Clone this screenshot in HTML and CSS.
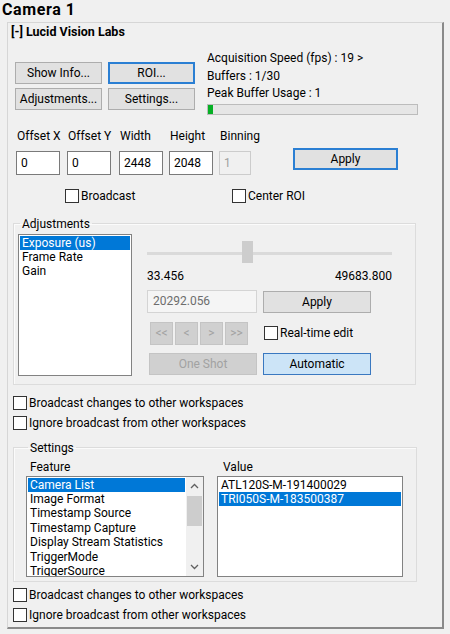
FILE: index.html
```html
<!DOCTYPE html>
<html>
<head>
<meta charset="utf-8">
<title>Camera 1</title>
<link rel="stylesheet" href="styles.css">
</head>
<body>
<div class="title">Camera 1</div>
<div class="panel">
  <div class="panel-head">[-] Lucid Vision Labs</div>

  <div class="top">
    <div class="btn-grid">
      <button class="btn">Show Info...</button>
      <button class="btn focus">ROI...</button>
      <button class="btn">Adjustments...</button>
      <button class="btn">Settings...</button>
    </div>
    <div class="info">
      <div class="info-line">Acquisition Speed (fps) : 19 &gt;</div>
      <div class="info-line">Buffers : 1/30</div>
      <div class="info-line">Peak Buffer Usage : 1</div>
      <div class="progress"><div class="progress-fill" style="width:5px"></div></div>
    </div>
  </div>

  <div class="roi">
    <div class="field f1"><span class="field-label">Offset X</span><span class="textbox">0</span></div>
    <div class="field f2"><span class="field-label">Offset Y</span><span class="textbox">0</span></div>
    <div class="field f3"><span class="field-label">Width</span><span class="textbox">2448</span></div>
    <div class="field f4"><span class="field-label">Height</span><span class="textbox">2048</span></div>
    <div class="field f5"><span class="field-label">Binning</span><span class="textbox disabled">1</span></div>
    <button class="btn focus apply-roi">Apply</button>
  </div>

  <div class="roi-checks">
    <span class="check"><span class="box"></span>Broadcast</span>
    <span class="check"><span class="box"></span>Center ROI</span>
  </div>

  <fieldset class="group adjustments">
    <legend>Adjustments</legend>
    <div class="adj-body">
      <div class="listbox adj-list">
        <div class="item sel">Exposure (us)</div>
        <div class="item">Frame Rate</div>
        <div class="item">Gain</div>
      </div>
      <div class="adj-controls">
        <div class="slider"><div class="thumb"></div></div>
        <div class="range"><span>33.456</span><span>49683.800</span></div>
        <div class="entry-row">
          <span class="textbox readonly">20292.056</span>
          <button class="btn apply-adj">Apply</button>
        </div>
        <div class="nav-row">
          <button class="btn off nav">&lt;&lt;</button>
          <button class="btn off nav">&lt;</button>
          <button class="btn off nav">&gt;</button>
          <button class="btn off nav">&gt;&gt;</button>
          <span class="check realtime"><span class="box"></span>Real-time edit</span>
        </div>
        <div class="shot-row">
          <button class="btn off one-shot">One Shot</button>
          <button class="btn active automatic">Automatic</button>
        </div>
      </div>
    </div>
  </fieldset>

  <div class="ws-checks">
    <div class="check-line"><span class="box"></span>Broadcast changes to other workspaces</div>
    <div class="check-line"><span class="box"></span>Ignore broadcast from other workspaces</div>
  </div>

  <fieldset class="group settings">
    <legend>Settings</legend>
    <div class="settings-body">
      <div class="col">
        <div class="col-label">Feature</div>
        <div class="listbox feature-list">
          <div class="items">
            <div class="item sel">Camera List</div>
            <div class="item">Image Format</div>
            <div class="item">Timestamp Source</div>
            <div class="item">Timestamp Capture</div>
            <div class="item">Display Stream Statistics</div>
            <div class="item">TriggerMode</div>
            <div class="item">TriggerSource</div>
          </div>
          <div class="scrollbar">
            <div class="arrow"><svg width="9" height="6" viewBox="0 0 9 6"><polyline points="1,5 4.5,1.5 8,5" fill="none" stroke="#606060" stroke-width="1.3"/></svg></div>
            <div class="sb-thumb"></div>
            <div class="arrow down"><svg width="9" height="6" viewBox="0 0 9 6"><polyline points="1,1 4.5,4.5 8,1" fill="none" stroke="#606060" stroke-width="1.3"/></svg></div>
          </div>
        </div>
      </div>
      <div class="col">
        <div class="col-label value-label">Value</div>
        <div class="listbox value-list">
          <div class="item">ATL120S-M-191400029</div>
          <div class="item sel">TRI050S-M-183500387</div>
        </div>
      </div>
    </div>
  </fieldset>

  <div class="ws-checks bottom">
    <div class="check-line"><span class="box"></span>Broadcast changes to other workspaces</div>
    <div class="check-line"><span class="box"></span>Ignore broadcast from other workspaces</div>
  </div>
</div>
</body>
</html>
```

FILE: styles.css
```css
* { box-sizing: border-box; }

html, body { margin: 0; padding: 0; }

body {
  width: 450px;
  height: 634px;
  overflow: hidden;
  background: #f0f0f0;
  color: #000;
  font-family: Roboto, "Noto Sans", sans-serif;
  font-size: 12px;
}

.title {
  font-weight: bold;
  font-size: 16px;
  letter-spacing: 0.6px;
  line-height: 20px;
  padding-left: 2px;
}

.panel {
  margin: 2px 0 0 7px;
  width: 437px;
  height: 607px;
  border-style: solid;
  border-width: 1px 2px 2px 1px;
  border-color: #d6d6d6 #8a8a8a #8a8a8a #d6d6d6;
}

.panel-head {
  font-weight: bold;
  font-size: 12.5px;
  line-height: 18px;
  padding-left: 3px;
}

/* buttons */
.btn {
  font: inherit;
  color: #000;
  height: 22px;
  padding: 0;
  background: #e1e1e1;
  border: 1px solid #adadad;
  white-space: nowrap;
}
.btn.focus { border: 2px solid #2b7fd3; }
.btn.off { background: #d0d0d0; border-color: #c4c4c4; color: #a2a2a2; }
.btn.active { background: #cce4f7; border-color: #3a78c0; }

/* top */
.top { display: flex; margin-top: 8px; }
.btn-grid {
  display: grid;
  grid-template-columns: 87px 87px;
  grid-auto-rows: 22px;
  column-gap: 6px;
  row-gap: 4px;
  margin: 13px 0 0 7px;
}
.info { margin-left: 12px; padding-top: 1px; }
.info-line { line-height: 17.5px; white-space: nowrap; }
.progress {
  margin-top: 1px;
  width: 211px;
  height: 11px;
  border: 1px solid #bcbcbc;
  background: #e6e6e6;
}
.progress-fill { height: 100%; background: #06b025; }

/* ROI */
.roi { display: flex; margin-top: 13px; padding-left: 8px; }
.field { display: flex; flex-direction: column; }
.f1 { width: 51px; }
.f2 { width: 52px; }
.f3 { width: 50px; }
.f4 { width: 50px; }
.f5 { width: 32px; }
.field-label { line-height: 16px; padding-left: 1px; margin-bottom: 7px; white-space: nowrap; }
.textbox {
  display: block;
  width: 44px;
  height: 24px;
  border: 1px solid #7a7a7a;
  background: #fff;
  padding-left: 4px;
  line-height: 22px;
}
.textbox.disabled { width: 32px; border-color: #cccccc; background: #f0f0f0; color: #a0a0a0; }
.apply-roi { width: 105px; margin: 20px 0 0 42px; }

.roi-checks {
  display: grid;
  grid-template-columns: 167px auto;
  margin-top: 13px;
  padding-left: 57px;
  line-height: 16px;
}
.check { display: inline-flex; align-items: center; gap: 2px; white-space: nowrap; }
.box {
  display: inline-block;
  flex: none;
  width: 14px;
  height: 14px;
  border: 1px solid #333;
  background: #fff;
}

/* group boxes */
fieldset.group {
  margin: 12px 0 0 5px;
  min-width: 0;
  border: 1px solid #dcdcdc;
  box-shadow: inset 1px 1px 0 #fbfbfb;
}
fieldset.group legend {
  padding: 0 2px;
  margin-left: 2px;
  line-height: 16px;
  font-size: 12px;
}
fieldset.adjustments { width: 403px; padding: 2px 8px 8px 4px; }

.listbox { border: 1px solid #828282; background: #fff; padding: 1px; }
.item { line-height: 14.4px; padding-left: 2px; white-space: nowrap; }
.item.sel { background: #0078d7; color: #fff; }

.adj-body { display: flex; }
.adj-list { width: 114px; height: 142px; }
.adj-controls { margin-left: 15px; width: 245px; padding-top: 7px; }
.slider {
  height: 22px;
  background: linear-gradient(#dadada, #dadada) 0 11px / 100% 3px no-repeat;
}
.thumb { width: 11px; height: 22px; margin-left: 95px; background: #cdcdcd; }
.range { display: flex; justify-content: space-between; line-height: 16px; margin-top: 5px; }
.entry-row { display: flex; align-items: flex-start; margin-top: 6px; }
.textbox.readonly { width: 110px; height: 23px; line-height: 21px; padding-left: 5px; background: #f5f5f5; border-color: #d4d4d4; color: #6d6d6d; }
.apply-adj { width: 108px; margin: 1px 0 0 6px; }
.nav-row { display: flex; align-items: center; margin-top: 9px; padding-left: 3px; gap: 2px; }
.nav { width: 23px; height: 23px; font-size: 12px; }
.realtime { margin-left: 14px; }
.shot-row { display: flex; margin-top: 8px; }
.one-shot { width: 108px; margin-left: 2px; }
.automatic { width: 108px; margin-left: 6px; }

/* workspace checks */
.ws-checks { margin-top: 8px; padding-left: 5px; }
.ws-checks.bottom { margin-top: 3px; }
.check-line { display: flex; align-items: center; gap: 2px; line-height: 20px; height: 20px; white-space: nowrap; }

/* settings */
fieldset.settings { width: 404px; margin-top: 7px; padding: 3px 13px 4px 12px; }
.settings-body { display: grid; grid-template-columns: 178px 186px; column-gap: 13px; }
.col-label { line-height: 16px; padding-left: 4px; margin-bottom: 1px; }
.value-label { padding-left: 6px; }
.feature-list { display: flex; height: 101px; padding: 0; }
.feature-list .items { flex: 1; padding: 1px; min-width: 0; overflow: hidden; }
.scrollbar { width: 17px; display: flex; flex-direction: column; background: #f0f0f0; }
.arrow { height: 18px; display: flex; align-items: center; justify-content: center; }
.arrow.down { margin-top: auto; }
.sb-thumb { height: 30px; margin: 1px 1px 0 1px; background: #cdcdcd; }
.value-list { height: 101px; }
```
